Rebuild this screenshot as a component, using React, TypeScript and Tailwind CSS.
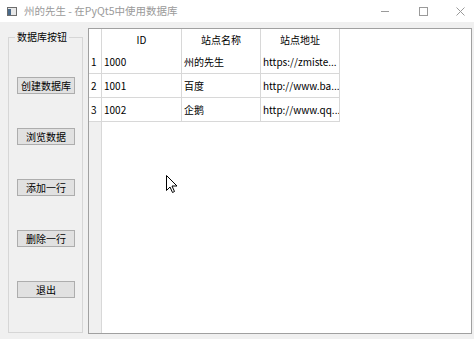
import React from "react";

const rows = [
  { n: "1", id: "1000", name: "州的先生", url: "https://zmiste..." },
  { n: "2", id: "1001", name: "百度", url: "http://www.ba..." },
  { n: "3", id: "1002", name: "企鹅", url: "http://www.qq..." },
];

const buttons = ["创建数据库", "浏览数据", "添加一行", "删除一行", "退出"];

export default function App() {
  return (
    <div className="relative w-[474px] h-[339px] overflow-hidden bg-[#f0f0f0] flex flex-col font-['Noto_Sans_CJK_SC','Microsoft_YaHei',sans-serif] text-[10px] text-black">
      {/* Title bar */}
      <div className="h-[22px] bg-white flex items-center shrink-0">
        <svg className="ml-[7px]" width="10" height="9" viewBox="0 0 10 9">
          <rect x="0.5" y="0.5" width="9" height="8" fill="#e8e8e8" stroke="#6d6d6d" />
          <rect x="1" y="2" width="3" height="6" fill="#4a6a8a" />
        </svg>
        <span className="ml-[7px] text-[#9a9a9a] leading-none text-[10.5px]">州的先生 - 在PyQt5中使用数据库</span>
        <div className="flex-1" />
        <svg className="mr-[30px]" width="8" height="10" viewBox="0 0 8 10">
          <line x1="0" y1="5.5" x2="8" y2="5.5" stroke="#9a9a9a" strokeWidth="1" />
        </svg>
        <svg className="mr-[28px]" width="9" height="9" viewBox="0 0 9 9">
          <rect x="0.5" y="0.5" width="8" height="8" fill="none" stroke="#9a9a9a" strokeWidth="1" />
        </svg>
        <svg className="mr-[9px]" width="9" height="9" viewBox="0 0 9 9">
          <path d="M0.5 0.5 L8.5 8.5 M8.5 0.5 L0.5 8.5" stroke="#9a9a9a" strokeWidth="1" />
        </svg>
      </div>

      {/* Body */}
      <div className="flex-1 flex pl-[8px]">
        {/* Group box */}
        <div className="relative mt-[15px] w-[75px] h-[296px] border border-[#d6d6d6] shrink-0">
          <span className="absolute -top-[8px] left-[6px] px-[2px] bg-[#f0f0f0] leading-[14px]">数据库按钮</span>
          <div className="flex flex-col pt-[39px] pl-[8px] gap-[34px]">
            {buttons.map((b) => (
              <div
                key={b}
                className="w-[58px] h-[17px] bg-[#e1e1e1] border border-[#adadad] flex items-center justify-center leading-none"
              >
                {b}
              </div>
            ))}
          </div>
        </div>

        {/* Table */}
        <div className="ml-[5px] mt-[6px] w-[384px] h-[306px] border border-[#a0a0a0] bg-white shrink-0 flex flex-col">
          <div className="flex h-[21px] shrink-0">
            <div className="w-[13px] border-r border-[#d8d8d8] bg-white" />
            <div className="w-[80px] border-r border-[#d8d8d8] flex items-center justify-center">ID</div>
            <div className="w-[79px] border-r border-[#d8d8d8] flex items-center justify-center">站点名称</div>
            <div className="w-[79px] border-r border-[#d8d8d8] flex items-center justify-center">站点地址</div>
          </div>
          {rows.map((r) => (
            <div key={r.n} className="flex h-[24px] shrink-0">
              <div className="w-[13px] border-r border-b border-[#d8d8d8] flex items-center pl-[2px]">{r.n}</div>
              <div className="w-[80px] border-r border-b border-[#d8d8d8] flex items-center pl-[2px]">{r.id}</div>
              <div className="w-[79px] border-r border-b border-[#d8d8d8] flex items-center pl-[2px]">{r.name}</div>
              <div className="w-[79px] border-r border-b border-[#d8d8d8] flex items-center pl-[2px] whitespace-nowrap overflow-hidden">{r.url}</div>
            </div>
          ))}
          <div className="flex flex-1">
            <div className="w-[13px] bg-[#f0f0f0] border-r border-[#d8d8d8]" />
          </div>
        </div>
      </div>

      {/* Mouse cursor */}
      <svg className="absolute left-[166px] top-[175px]" width="12" height="19" viewBox="0 0 12 19">
        <path d="M0.5 0.5 L0.5 15.5 L4 12 L6.5 17.5 L8.5 16.5 L6 11 L11 11 Z" fill="white" stroke="black" strokeWidth="1" strokeLinejoin="miter" />
      </svg>
    </div>
  );
}
